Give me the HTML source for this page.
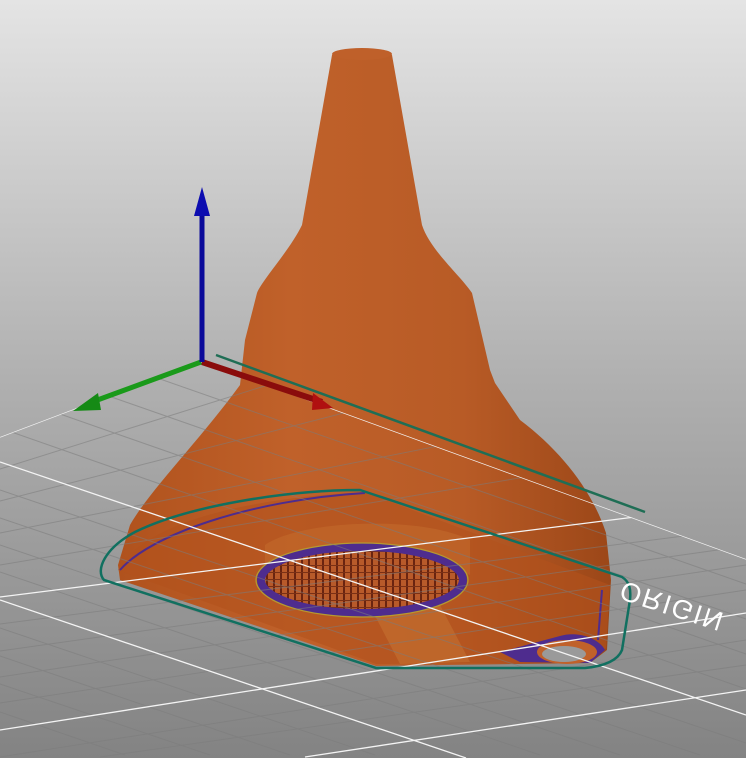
<!DOCTYPE html>
<html><head><meta charset="utf-8"><style>html,body{margin:0;padding:0;width:746px;height:758px;overflow:hidden}svg{display:block}</style></head>
<body>
<svg width="746" height="758" viewBox="0 0 746 758" xmlns="http://www.w3.org/2000/svg" style="overflow:hidden">
<defs>
<linearGradient id="bg" x1="0" y1="0" x2="0" y2="1">
<stop offset="0" stop-color="#e4e4e4"/><stop offset="0.5" stop-color="#b0b0b0"/><stop offset="1" stop-color="#838383"/>
</linearGradient>
<linearGradient id="body" x1="0" y1="0" x2="1" y2="0">
<stop offset="0" stop-color="#b0521d"/><stop offset="0.35" stop-color="#c0612a"/><stop offset="0.7" stop-color="#b85b26"/><stop offset="1" stop-color="#9c4718"/>
</linearGradient>
<pattern id="hatch" width="7" height="7" patternUnits="userSpaceOnUse">
<rect width="7" height="7" fill="#b85a2a"/><rect width="2" height="7" fill="#6a2410"/><rect y="5" width="7" height="1" fill="#7a3015"/>
</pattern>
<clipPath id="floor"><polygon points="0,437 201,361 746,559 746,758 0,758"/></clipPath>
</defs>
<rect width="746" height="758" fill="url(#bg)"/>
<path d="M332,55 L302,225 C290,250 262,280 257,293 L245,340 L240,385 C200,440 150,490 130,525 L118,565 L120,580 L376,666 L590,663 L607,650 L611,580 L606,533 C592,490 560,450 520,420 L495,383 L490,370 L472,293 C460,275 430,250 422,225 L392,55 Z" fill="url(#body)"/>
<ellipse cx="362" cy="54" rx="30" ry="6" fill="#bf602a"/>
<path d="M118,570 C140,530 220,500 365,492 L610,585 L606,648 L590,662 L376,664 Z" fill="#b3521c" opacity="0.6"/>
<path d="M265,545 C300,520 420,515 470,540 L470,575 C440,560 300,560 265,575 Z" fill="#c66d2e" opacity="0.5"/>
<path d="M372,610 L400,664 L470,662 L440,605 Z" fill="#c87634" opacity="0.5"/>
<ellipse cx="362" cy="580" rx="101" ry="33" fill="url(#hatch)" stroke="#4e2c8e" stroke-width="8"/>
<ellipse cx="362" cy="580" rx="106" ry="37" fill="none" stroke="#b59a30" stroke-width="1.2"/>
<path d="M500,652 L560,636 C580,630 600,640 605,650 L590,663 L520,662 Z" fill="#4e2c8e"/>
<ellipse cx="567" cy="652" rx="30" ry="12" fill="#c0612a"/>
<ellipse cx="564" cy="654" rx="22" ry="8" fill="#9a9a9a"/>
<path d="M120,570 C150,535 250,500 365,493" fill="none" stroke="#4e2c8e" stroke-width="2"/>
<path d="M602,590 L598,640" fill="none" stroke="#4e2c8e" stroke-width="2"/>
<g clip-path="url(#floor)" stroke="#7c7c7c" stroke-width="1" opacity="0.55">
<line x1="0" y1="323" x2="746" y2="584"/><line x1="0" y1="358" x2="746" y2="619"/><line x1="0" y1="393" x2="746" y2="654"/><line x1="0" y1="428" x2="746" y2="689"/>
<line x1="0" y1="490" x2="746" y2="743"/><line x1="0" y1="518" x2="700" y2="755"/><line x1="0" y1="545" x2="620" y2="755"/><line x1="0" y1="572" x2="540" y2="755"/>
<line x1="0" y1="628" x2="375" y2="755"/><line x1="0" y1="656" x2="290" y2="755"/><line x1="0" y1="684" x2="210" y2="755"/><line x1="0" y1="712" x2="125" y2="755"/>
<line x1="0" y1="469" x2="746" y2="235"/><line x1="0" y1="501" x2="746" y2="310"/><line x1="0" y1="533" x2="746" y2="385"/><line x1="0" y1="565" x2="746" y2="440"/>
<line x1="0" y1="624" x2="746" y2="528"/><line x1="0" y1="651" x2="746" y2="546"/><line x1="0" y1="677" x2="746" y2="565"/><line x1="0" y1="703" x2="746" y2="590"/>
<line x1="0" y1="757" x2="746" y2="640"/><line x1="100" y1="757" x2="746" y2="665"/>
</g>
<g clip-path="url(#floor)" stroke="#f4f4f4" stroke-width="1.3">
<line x1="0" y1="437" x2="201" y2="361"/><line x1="201" y1="361" x2="746" y2="559"/>
<line x1="0" y1="462" x2="746" y2="715"/><line x1="0" y1="600" x2="466" y2="758"/>
<line x1="0" y1="597" x2="746" y2="503"/><line x1="0" y1="730" x2="746" y2="613"/><line x1="305" y1="757" x2="746" y2="690"/>
</g>
<path d="M104,580 C95,570 105,548 135,532 C190,505 290,490 360,490 L372,494 L622,577 C630,582 631,590 630,600 L622,650 C618,660 605,666 585,668 L376,668 Z" fill="none" stroke="#117060" stroke-width="2.5"/>
<line x1="216" y1="355" x2="645" y2="512" stroke="#1f6e55" stroke-width="2.5"/>
<line x1="202" y1="362" x2="322" y2="402" stroke="#8a0c0c" stroke-width="6"/>
<polygon points="313,393 333,408 312,410" fill="#b01010"/>
<line x1="201" y1="362" x2="92" y2="402" stroke="#1a9a1a" stroke-width="5"/>
<polygon points="98,393 73,411 101,410" fill="#158a15"/>
<line x1="202" y1="362" x2="202" y2="213" stroke="#0a0a9a" stroke-width="5"/>
<polygon points="194,216 210,216 202,187" fill="#0c0cb0"/>
<text transform="translate(618,599) rotate(18) scale(1,-1)" font-family="Liberation Sans, sans-serif" font-size="27" fill="#ffffff" dominant-baseline="hanging" letter-spacing="2">ORIGIN</text>
</svg>
</body></html>
